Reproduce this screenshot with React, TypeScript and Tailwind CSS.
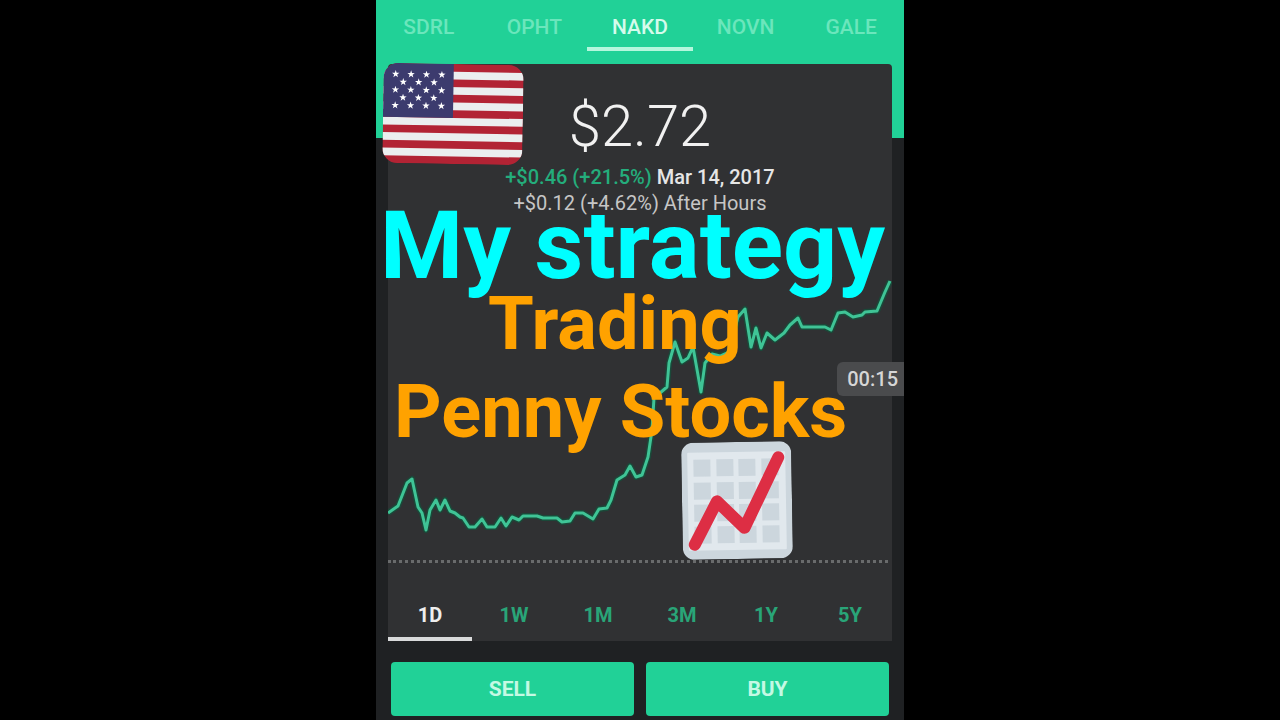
import { useState } from "react";
import clsx from "clsx";

const tickers = ["SDRL", "OPHT", "NAKD", "NOVN", "GALE"];
const ranges = ["1D", "1W", "1M", "3M", "1Y", "5Y"];

const chartPoints =
	"0,241 10,234 19,211 24,207 30,235 34,241 38,258 42,238 48,228 52,238 57,228 62,239 67,241 72,245 75,246 81,255 87,255 94,247 99,255 107,255 113,246 118,254 124,245 131,248 135,244 149,244 155,246 169,246 174,250 182,249 187,241 195,241 205,247 211,237 219,236 223,228 229,208 237,203 242,194 248,205 254,203 260,185 264,158 266,126 279,115 281,91 287,70 294,90 300,86 305,75 313,120 317,91 324,82 332,84 341,80 350,45 357,37 363,75 368,56 373,76 379,61 387,68 396,61 402,53 410,46 414,55 437,55 443,58 450,41 457,40 465,45 474,43 477,40 489,39 497,20 502,9";

const starRows = [4, 3, 4, 3, 4];

function Flag() {
	return (
		<svg viewBox="0 0 140 100" className="w-full" role="img" aria-label="United States flag">
			<clipPath id="flag-shape">
				<rect width="140" height="100" rx="15" />
			</clipPath>
			<g clipPath="url(#flag-shape)">
				<rect width="140" height="100" fill="#b22334" />
				{[1, 3, 5, 7, 9, 11].map((i) => (
					<rect key={i} y={i * 7.7} width="140" height="7.7" fill="#ebeeef" />
				))}
				<rect width="70" height="53.9" fill="#3c3b6e" />
				{starRows.map((count, row) =>
					Array.from({ length: count }, (_, i) => (
						<path
							key={`${row}-${i}`}
							transform={`translate(${12 + i * 15.4 + (count === 3 ? 7.7 : 0)} ${11 + row * 7.8})`}
							d="M0-3.9 .9-1.2 3.7-1.2 1.5.5 2.3 3.2 0 1.5-2.3 3.2-1.5.5-3.7-1.2-.9-1.2Z"
							fill="#fff"
						/>
					))
				)}
			</g>
		</svg>
	);
}

function ChartEmoji() {
	return (
		<svg viewBox="0 0 110 117" className="w-full" role="img" aria-label="Chart increasing">
			<rect width="110" height="117" rx="12" fill="#ccd6dd" />
			<rect x="6" y="10" width="98" height="98" rx="1" fill="#e1e8ed" />
			{[17, 40, 62, 84].map((y) =>
				[12, 35, 57, 80].map((x) => (
					<rect key={`${x}-${y}`} x={x} y={y} width="17" height="17" fill="#ccd6dd" />
				))
			)}
			<path
				d="M12 102 35 59 62 86 97 16"
				fill="none"
				stroke="#dd2e44"
				strokeWidth="12"
				strokeLinecap="round"
				strokeLinejoin="round"
			/>
		</svg>
	);
}

export default function App() {
	const [ticker, setTicker] = useState("NAKD");
	const [range, setRange] = useState("1D");

	return (
		<div className="min-h-screen bg-black font-['Roboto',sans-serif]">
			<main className="relative mx-auto min-h-screen w-full max-w-[528px] overflow-hidden bg-[#1f2123] pb-1">
				<header className="h-[138px] bg-[#21d197]">
					<nav className="flex">
						{tickers.map((name) => (
							<button
								key={name}
								type="button"
								onClick={() => setTicker(name)}
								className={clsx(
									"h-[51px] flex-1 border-b-4 pt-2 text-[21px] font-medium",
									name === ticker
										? "border-[#b5f7dd] text-[#d5fbec]"
										: "border-transparent text-[#6be6bc]"
								)}
							>
								{name}
							</button>
						))}
					</nav>
				</header>

				<section className="mx-3 -mt-[74px] rounded-t-sm bg-[#303133] pt-8 text-center">
					<h1 className="text-[58px] leading-[60px] font-light text-[#f1f1f1]">$2.72</h1>
					<p className="mt-2 text-[20px] leading-[26px] font-medium text-[#e6e6e6]">
						<span className="text-[#24ad7c]">+$0.46 (+21.5%)</span> Mar 14, 2017
					</p>
					<p className="text-[20px] leading-[26px] text-[#c6c6c6]">+$0.12 (+4.62%) After Hours</p>

					<svg viewBox="0 0 504 274" className="mt-14 w-full" role="img" aria-label="NAKD price, 1 day">
						<polyline
							points={chartPoints}
							fill="none"
							stroke="#0b5a3d"
							strokeWidth="6"
							strokeLinejoin="round"
							opacity="0.6"
						/>
						<polyline
							points={chartPoints}
							fill="none"
							stroke="#3fc496"
							strokeWidth="3"
							strokeLinejoin="round"
						/>
					</svg>

					<div className="mt-3.5 mr-1 border-b-[3px] border-dotted border-[#696b6c]" />

					<div className="mt-7 flex">
						{ranges.map((name) => (
							<button
								key={name}
								type="button"
								onClick={() => setRange(name)}
								className={clsx(
									"h-[50px] flex-1 border-b-4 pt-0.5 text-[20px] font-bold",
									name === range
										? "border-[#d9dadb] text-[#eeeeee]"
										: "border-transparent text-[#29a578]"
								)}
							>
								{name}
							</button>
						))}
					</div>
				</section>

				<div className="mt-[21px] flex gap-3 px-[15px]">
					<button
						type="button"
						className="h-[54px] flex-1 rounded-sm bg-[#21d197] pt-0.5 text-[21px] font-bold text-[#c4f9e4]"
					>
						SELL
					</button>
					<button
						type="button"
						className="h-[54px] flex-1 rounded-sm bg-[#21d197] pt-0.5 text-[21px] font-bold text-[#c4f9e4]"
					>
						BUY
					</button>
				</div>

				<div className="absolute top-[64px] left-[7px] w-[140px] rotate-1">
					<Flag />
				</div>

				<div className="absolute top-[204px] left-0 whitespace-nowrap">
					<p className="pl-1 text-[95px] leading-[84px] font-bold text-[#00ffff]">My strategy</p>
					<p className="pl-28 text-[74px] leading-[72px] font-bold text-[#ffa200]">Trading</p>
					<p className="mt-4 pl-[18px] text-[74px] leading-[72px] font-bold text-[#ffa200]">
						Penny Stocks
					</p>
				</div>

				<div className="absolute top-[442px] left-[306px] w-[110px] -rotate-1">
					<ChartEmoji />
				</div>

				<div className="absolute top-[362px] right-0 rounded-l-md bg-[#4a4b4d] pr-1.5 pl-2.5 text-[20px] leading-[34px] font-medium text-[#d6d6d6]">
					00:15
				</div>
			</main>
		</div>
	);
}
